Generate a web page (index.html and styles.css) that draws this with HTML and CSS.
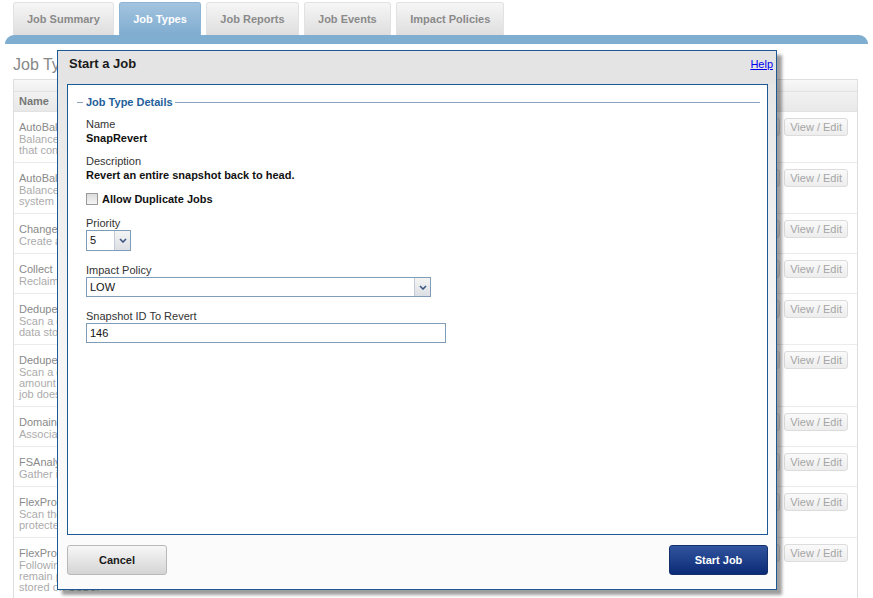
FILE: index.html
```html
<!DOCTYPE html>
<html lang="en">
<head>
    <meta charset="UTF-8">
    <title>Job Types</title>
    <link rel="stylesheet" href="styles.css">
</head>
<body>

    <div class="tabs">
        <a class="tab">Job Summary</a>
        <a class="tab tab-active">Job Types</a>
        <a class="tab">Job Reports</a>
        <a class="tab">Job Events</a>
        <a class="tab">Impact Policies</a>
    </div>
    <div class="tab-bar"></div>

    <div class="content">
        <h2 class="page-title">Job Types</h2>

        <div class="job-table">
            <div class="table-top"></div>
            <div class="table-head">Name</div>

            <div class="row">
                <div class="name-cell">
                    <div class="job-name">AutoBalance</div>
                    <div class="job-desc">Balance free space in a cluster.</div>
                    <div class="job-desc">that contain only hard disk drives.</div>
                </div>
                <div class="actions"><span class="btn-small">Start Job</span><span class="btn-small">View / Edit</span></div>
            </div>
            <div class="row">
                <div class="name-cell">
                    <div class="job-name">AutoBalanceLin</div>
                    <div class="job-desc">Balance free space in a cluster.</div>
                    <div class="job-desc">system metadata is on SSDs.</div>
                </div>
                <div class="actions"><span class="btn-small">Start Job</span><span class="btn-small">View / Edit</span></div>
            </div>
            <div class="row">
                <div class="name-cell">
                    <div class="job-name">ChangelistCreate</div>
                    <div class="job-desc">Create a list of changes.</div>
                </div>
                <div class="actions"><span class="btn-small">Start Job</span><span class="btn-small">View / Edit</span></div>
            </div>
            <div class="row">
                <div class="name-cell">
                    <div class="job-name">Collect</div>
                    <div class="job-desc">Reclaims free space.</div>
                </div>
                <div class="actions"><span class="btn-small">Start Job</span><span class="btn-small">View / Edit</span></div>
            </div>
            <div class="row">
                <div class="name-cell">
                    <div class="job-name">Dedupe</div>
                    <div class="job-desc">Scan a directory for redundant data.</div>
                    <div class="job-desc">data stored in the directory.</div>
                </div>
                <div class="actions"><span class="btn-small">Start Job</span><span class="btn-small">View / Edit</span></div>
            </div>
            <div class="row">
                <div class="name-cell">
                    <div class="job-name">DedupeAssessment</div>
                    <div class="job-desc">Scan a directory for redundant data.</div>
                    <div class="job-desc">amount of space that could be saved.</div>
                    <div class="job-desc">job does not deduplicate any data.</div>
                </div>
                <div class="actions"><span class="btn-small">Start Job</span><span class="btn-small">View / Edit</span></div>
            </div>
            <div class="row">
                <div class="name-cell">
                    <div class="job-name">DomainMark</div>
                    <div class="job-desc">Associate a path with a domain.</div>
                </div>
                <div class="actions"><span class="btn-small">Start Job</span><span class="btn-small">View / Edit</span></div>
            </div>
            <div class="row">
                <div class="name-cell">
                    <div class="job-name">FSAnalyze</div>
                    <div class="job-desc">Gather information about the file system.</div>
                </div>
                <div class="actions"><span class="btn-small">Start Job</span><span class="btn-small">View / Edit</span></div>
            </div>
            <div class="row">
                <div class="name-cell">
                    <div class="job-name">FlexProtect</div>
                    <div class="job-desc">Scan the file system after a failure.</div>
                    <div class="job-desc">protected.</div>
                </div>
                <div class="actions"><span class="btn-small">Start Job</span><span class="btn-small">View / Edit</span></div>
            </div>
            <div class="row">
                <div class="name-cell">
                    <div class="job-name">FlexProtectLin</div>
                    <div class="job-desc">Following a device failure, scan.</div>
                    <div class="job-desc">remain protected.</div>
                    <div class="job-desc">stored on SSDs.</div>
                </div>
                <div class="actions"><span class="btn-small">Start Job</span><span class="btn-small">View / Edit</span></div>
            </div>
        </div>
    </div>

    <!-- Start a Job dialog -->
    <div class="dialog">
        <div class="dialog-header">
            <span class="dialog-title">Start a Job</span>
            <a class="help-link" href="#">Help</a>
        </div>

        <div class="dialog-panel">
            <div class="group">
                <div class="legend">Job Type Details</div>

                <div class="field field-first">
                    <div class="label">Name</div>
                    <div class="value">SnapRevert</div>
                </div>
                <div class="field field-desc">
                    <div class="label">Description</div>
                    <div class="value">Revert an entire snapshot back to head.</div>
                </div>
                <div class="check-row">
                    <span class="checkbox"></span>
                    <span class="value">Allow Duplicate Jobs</span>
                </div>
                <div class="field field-priority">
                    <div class="label">Priority</div>
                    <div class="select select-small">
                        <span class="select-text">5</span>
                        <span class="select-arrow">
                            <svg width="8" height="5" viewBox="0 0 8 5"><path d="M1 1 L4 4 L7 1" fill="none" stroke="#3d5780" stroke-width="1.6"/></svg>
                        </span>
                    </div>
                </div>
                <div class="field field-wide">
                    <div class="label">Impact Policy</div>
                    <div class="select select-policy">
                        <span class="select-text">LOW</span>
                        <span class="select-arrow">
                            <svg width="8" height="5" viewBox="0 0 8 5"><path d="M1 1 L4 4 L7 1" fill="none" stroke="#3d5780" stroke-width="1.6"/></svg>
                        </span>
                    </div>
                </div>
                <div class="field field-wide">
                    <div class="label">Snapshot ID To Revert</div>
                    <div class="text-input">146</div>
                </div>
            </div>
        </div>

        <div class="dialog-footer">
            <button class="btn btn-cancel">Cancel</button>
            <button class="btn btn-primary">Start Job</button>
        </div>
    </div>

</body>
</html>
```

FILE: styles.css
```css
body {
    margin: 0;
    height: 598px;
    overflow: hidden;
    background-color: #fff;
    font-family: "Liberation Sans", Arial, sans-serif;
    font-size: 11px;
    color: #333;
}

/* tabs */
.tabs {
    display: flex;
    gap: 5.5px;
    padding: 2px 0 0 13px;
}

.tab {
    display: block;
    height: 33px;
    line-height: 33px;
    padding: 0 13px;
    box-sizing: border-box;
    font-size: 11px;
    font-weight: bold;
    color: #8a8a8a;
    background: linear-gradient(#f6f6f6, #dedede);
    border: 1px solid #e2e2e2;
    border-bottom: none;
    border-radius: 3px 3px 0 0;
}

.tab-active {
    color: #fff;
    background: linear-gradient(#a3c4df, #80acd0);
    border-color: #8db4d4;
}

.tab-bar {
    height: 9px;
    margin: 0 5px;
    background-color: #80aed0;
    border-radius: 10px 10px 0 0;
}

/* job types table */
.content {
    padding: 0 15px 0 13px;
}

.page-title {
    margin: 13px 0 6px;
    font-size: 16px;
    line-height: 16px;
    font-weight: normal;
    color: #888;
}

.job-table {
    border: 1px solid #dedede;
    border-bottom: none;
}

.table-top {
    height: 11px;
    background: linear-gradient(#f8f8f8, #efefef);
    border-bottom: 1px solid #e2e2e2;
}

.table-head {
    height: 19px;
    line-height: 19px;
    padding-left: 5px;
    font-weight: bold;
    color: #777;
    background: linear-gradient(#f2f2f2, #e8e8e8);
    border-bottom: 1px solid #e2e2e2;
}

.row {
    display: flex;
    justify-content: space-between;
    border-bottom: 1px solid #ececec;
    padding: 9px 0 6px 5px;
}

.job-name {
    line-height: 13px;
    color: #8a8a8a;
    white-space: nowrap;
}

.job-desc {
    line-height: 11px;
    color: #ababab;
    white-space: nowrap;
}

.actions {
    display: flex;
    gap: 4px;
    align-items: flex-start;
    padding: 0 9px 0 0;
    margin-top: -3px;
}

.btn-small {
    display: block;
    height: 18px;
    line-height: 16px;
    box-sizing: border-box;
    padding: 0 5px;
    color: #a5a5a5;
    background: linear-gradient(#fafafa, #ededed);
    border: 1px solid #dcdcdc;
    border-radius: 3px;
}

/* dialog */
.dialog {
    position: absolute;
    left: 57px;
    top: 50px;
    width: 720px;
    height: 540px;
    box-sizing: border-box;
    border: 1px solid #1b5a94;
    background: linear-gradient(#e4e4e4, #f2f2f2 40%, #fbfbfb 90%);
    box-shadow: 5px 5px 3px rgba(0, 0, 0, 0.38);
}

.dialog-header {
    height: 33px;
    display: flex;
    justify-content: space-between;
    align-items: flex-start;
    padding: 0 3px 0 11px;
    background-color: #e4e4e4;
}

.dialog-title {
    margin-top: 5px;
    font-size: 13px;
    font-weight: bold;
    color: #1a1a1a;
}

.help-link {
    margin-top: 7px;
    color: #0000ee;
    text-decoration: underline;
}

.dialog-panel {
    width: 701px;
    height: 451px;
    box-sizing: border-box;
    margin-left: 9px;
    padding: 11px 7px 0 9px;
    background-color: #fff;
    border: 1px solid #1b5a94;
}

.legend {
    display: flex;
    align-items: center;
    height: 12px;
    font-weight: bold;
    color: #23609a;
}

.legend::before {
    content: "";
    width: 6px;
    height: 1px;
    margin-right: 3px;
    background-color: #8aa3bf;
}

.legend::after {
    content: "";
    flex: 1;
    height: 1px;
    margin-left: 2px;
    background-color: #8aa3bf;
}

.field,
.check-row {
    margin-left: 9px;
    margin-top: 10px;
}

.field-first {
    margin-top: 10px;
}

.field-desc {
    margin-top: 10px;
}

.label {
    line-height: 13px;
    color: #333;
}

.value {
    line-height: 14px;
    font-weight: bold;
    color: #111;
}

.check-row {
    display: flex;
    align-items: center;
    gap: 4px;
    height: 14px;
    margin-top: 10px;
}

.checkbox {
    width: 12px;
    height: 12px;
    box-sizing: border-box;
    border: 1px solid #9a9a9a;
    background: linear-gradient(#dcdcdc, #f4f4f4);
}

.field-priority {
    margin-top: 11px;
}

.field-wide {
    margin-top: 13px;
}

.select {
    display: flex;
    box-sizing: border-box;
    border: 1px solid #7f9db9;
    background-color: #fff;
}

.select-small {
    width: 45px;
    height: 21px;
}

.select-policy {
    width: 345px;
    height: 20px;
}

.select-text {
    flex: 1;
    padding-left: 3px;
    line-height: 18px;
    color: #111;
}

.select-arrow {
    width: 15px;
    display: flex;
    align-items: center;
    justify-content: center;
    background: linear-gradient(#f4f4f4, #dcdfe4);
    border-left: 1px solid #c3cbd6;
}

.text-input {
    width: 360px;
    height: 20px;
    box-sizing: border-box;
    padding-left: 3px;
    line-height: 18px;
    color: #111;
    border: 1px solid #7f9db9;
}

.dialog-footer {
    display: flex;
    justify-content: space-between;
    padding: 10px 8px 0 9px;
}

.btn {
    width: 100px;
    height: 30px;
    box-sizing: border-box;
    font-family: "Liberation Sans", Arial, sans-serif;
    font-size: 11px;
    font-weight: bold;
    border-radius: 3px;
    cursor: pointer;
}

.btn-cancel {
    color: #1a1a1a;
    background: linear-gradient(#f7f7f7, #d4d4d4);
    border: 1px solid #b8b8b8;
}

.btn-primary {
    width: 99px;
    color: #fff;
    background: linear-gradient(#31549e, #0c2a76);
    border: 1px solid #142f6d;
}
```
